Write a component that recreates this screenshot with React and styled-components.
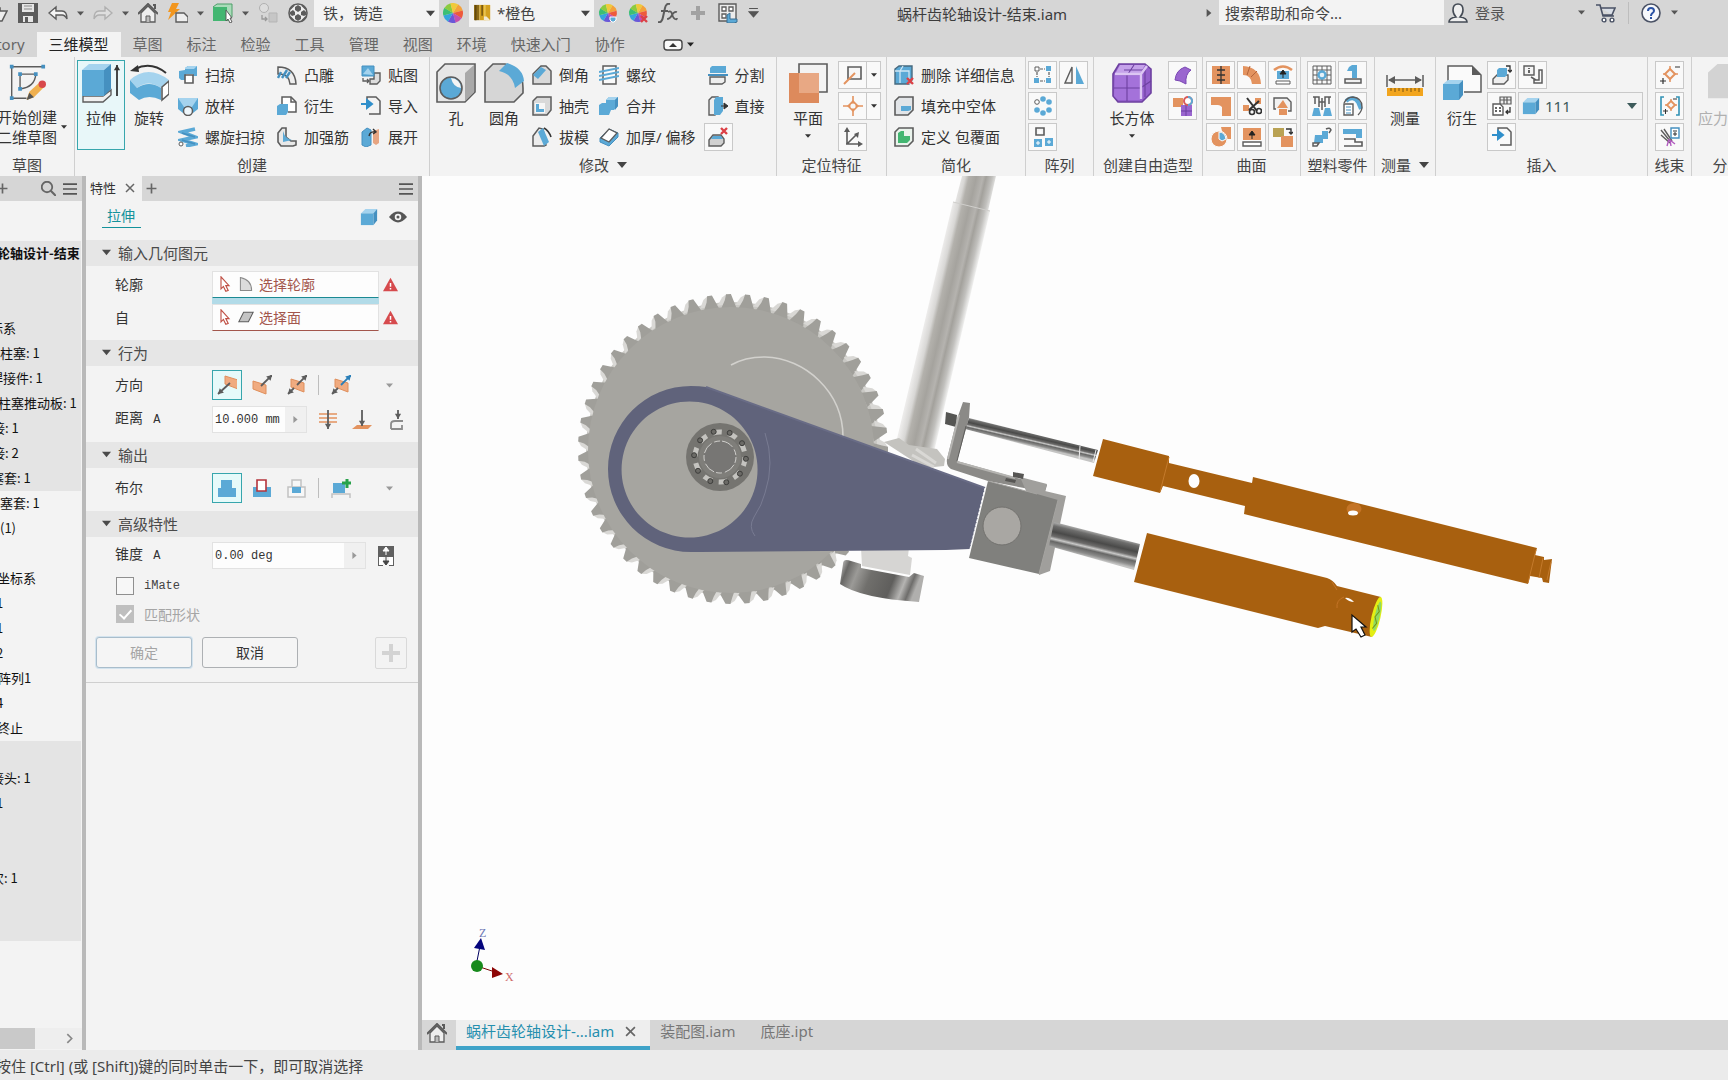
import React from 'react'
import styled, { createGlobalStyle } from 'styled-components'

const GlobalStyle = createGlobalStyle`
  * {
    box-sizing: border-box;
  }
  body {
    margin: 0;
    background: #ebebeb;
    color: #333;
    font-family: 'Noto Sans', 'Noto Sans CJK SC', sans-serif;
    font-size: 15px;
    line-height: 20px;
    overflow-x: hidden;
  }
  button, input, select {
    font: inherit;
    color: inherit;
    margin: 0;
    padding: 0;
    border: 0;
    background: none;
    border-radius: 0;
  }
  h1, h2, ul {
    margin: 0;
    padding: 0;
    font-size: inherit;
    font-weight: normal;
    list-style: none;
  }
  svg {
    display: block;
    flex: none;
  }
`

/* ---------- icons ---------- */

const B = '#5ba9d6'
const L = '#a5d3ee'
const D = '#4590c0'
const G = '#5c5c5c'
const O = '#e3935f'

const Doc = ({ x = 0, y = 0 }) => (
  <path d={`M${x + 3} ${y + 7}V${y + 1}h9l4 4v13H${x + 5}`} fill="none" stroke={G} strokeWidth="1.5" />
)
const RedX = ({ x, y }) => <path d={`M${x} ${y}l6 6m0-6l-6 6`} stroke="#dc4046" strokeWidth="2.4" />
const Wheel = ({ r = 10 }) => {
  const colors = ['#f4a13a', '#ee5a3c', '#c54fae', '#6a58d8', '#35a5dc', '#3cbf74', '#8bcb3f', '#f0c93a']
  return colors.map((c, i) => {
    const a = ((i * 45 - 60) * Math.PI) / 180
    const b = ((i * 45 - 14) * Math.PI) / 180
    return (
      <path key={c} fill={c} d={`M10 10L${10 + r * Math.cos(a)} ${10 + r * Math.sin(a)}A${r} ${r} 0 0 1 ${10 + r * Math.cos(b)} ${10 + r * Math.sin(b)}Z`} />
    )
  })
}
const Cube = () => (
  <>
    <path d="M1 6l5-5h13l-3 5z" fill={L} />
    <path d="M1 6h14v13H1z" fill={B} />
    <path d="M15 6l4-5v13l-4 5z" fill={D} />
  </>
)
const Plane = ({ x = 0, y = 0 }) => <path d={`M${x + 4} ${y + 4}l13 4v9l-13-5z`} fill="#f0ab80" stroke="#e08f5c" />
const Arrow = ({ c = G, from = [14, 7], to = [3, 20] }) => {
  const a = Math.atan2(to[1] - from[1], to[0] - from[0])
  const p = (o, d) => `${to[0] + d * Math.cos(a + o)} ${to[1] + d * Math.sin(a + o)}`
  return (
    <>
      <path d={`M${from[0]} ${from[1]}L${to[0]} ${to[1]}`} stroke={c} strokeWidth="1.8" />
      <path d={`M${to[0]} ${to[1]}L${p(2.6, 6)}L${p(-2.6, 6)}Z`} fill={c} />
    </>
  )
}

const icons = {
  open: <path d="M0 18h14l5-10H5L0 16M12 8V5H0" fill="#eee" stroke={G} strokeWidth="1.6" />,
  save: (
    <>
      <path d="M0 0h20v20H0z" fill={G} />
      <path d="M4 1h12v8H4zM5 13h10v6H5z" fill="#e6e6e6" />
      <path d="M6 3h8M6 6h8" stroke="#888" />
      <path d="M7 14h3v5H7z" fill={G} />
    </>
  ),
  undo: <path d="M1 10l7-6v4h6q5 0 5 8-2-4-5-4H8v4z" fill="#f4f4f4" stroke={G} strokeWidth="1.4" />,
  redo: <path d="M19 10l-7-6v4H6q-5 0-5 8 2-4 5-4h6v4z" fill="#dedede" stroke="#b0b0b0" strokeWidth="1.4" />,
  home: (
    <>
      <path d="M3 10v9h14v-9l-7-7z" fill="#eee" stroke={G} strokeWidth="1.3" />
      <path d="M0 11L10 1l10 10M15 2h2v4" fill="none" stroke={G} strokeWidth="2" />
      <path d="M8 19v-6h4v6" fill="#bbb" stroke={G} />
    </>
  ),
  bolt: (
    <>
      <path d="M4 0h7L8 6h4L0 17l3-8H0z" fill="#f2961e" />
      <path d="M8 10h8l4 4v5H8z" fill="#eee" stroke={G} strokeWidth="1.4" />
    </>
  ),
  select: (
    <>
      <path d="M0 4l4-3h15v13l-4 4z" fill="#a9dcb9" stroke="#4d9e69" />
      <path d="M0 4h14v14H0z" fill="#43b671" />
      <path d="M13 7v11l2-2 2 4 2-1-2-4h2z" fill="#fff" stroke={G} />
    </>
  ),
  link: (
    <>
      <circle cx="6" cy="5" r="4.5" fill="#ddd" stroke="#b0b0b0" />
      <path d="M11 10h8v9h-8z" fill="#c6c6c6" stroke="#b5b5b5" />
      <path d="M4 12v4h5m-2-2l2 2-2 2" fill="none" stroke="#999" strokeWidth="1.3" />
    </>
  ),
  ball: (
    <>
      <circle cx="10" cy="10" r="9" fill="#eee" stroke={G} strokeWidth="1.6" />
      <path d="M7 4l3-2 3 2v3l-3 2-3-2zM7 13l3-2 3 2v3l-3 2-3-2zM2 9l3-2 2 2v3l-3 1-2-2zM13 9l3-2 2 2v3l-2 1-3-1z" fill={G} />
      <path d="M2 6l4-4M14 2l4 4M2 14l4 4M18 14l-4 4" stroke={G} strokeWidth="2" />
    </>
  ),
  wheel: <Wheel />,
  wheelPick: (
    <>
      <Wheel r={9} />
      <path d="M12 14h6v3l-2 2h-2l-2-2z" fill={B} stroke="#fff" />
    </>
  ),
  wheelClear: (
    <>
      <Wheel r={9} />
      <RedX x={13} y={13} />
    </>
  ),
  swatch: (
    <>
      <path d="M0 1h6v17H0z" fill="#8b6a16" />
      <path d="M6 1h12v17H6z" fill="#d3a01f" />
      <path d="M2 1v17M9 1v12" stroke="#5c420c" strokeWidth="1.4" />
      <path d="M12 1v17" stroke="#e9c34f" strokeWidth="2" />
      <path d="M11 14h3l4 4h-7z" fill="#f3ead0" />
    </>
  ),
  fx: (
    <>
      <path d="M0 19q4 1 5-5l2-9q1-5 5-4M3 8h7" fill="none" stroke={G} strokeWidth="2" />
      <path d="M10 9q3-2 4 2t3 5 2-1M19 9q-3-1-5 3t-5 4" fill="none" stroke={G} strokeWidth="1.7" />
    </>
  ),
  plusGrey: <path d="M10 3v14M3 10h14" stroke="#a2a2a2" strokeWidth="4" />,
  parts: (
    <>
      <path d="M1 1h17v17H1z" fill="#ececec" stroke={G} strokeWidth="1.4" />
      <path d="M4 4h4v4H4zM11 4h4v4h-4zM4 11h4v4H4z" fill="#fff" stroke={G} strokeWidth="1.3" />
      <path d="M9 12l3-2v6h7v3l-3 1H9z" fill={B} stroke="#3b6f93" />
    </>
  ),
  user: (
    <path d="M1 19q0-4 7-5-3-3-3-7 0-6 5-6t5 6q0 4-3 7 7 1 7 5z" fill="#efefef" stroke="#444b55" strokeWidth="1.6" />
  ),
  cart: (
    <>
      <path d="M0 2h4l3 11h11M5 5h14l-3 7H7" fill="#d9dee6" stroke="#4a5265" strokeWidth="1.6" />
      <circle cx="8" cy="17" r="1.9" fill="#fff" stroke="#4a5265" strokeWidth="1.4" />
      <circle cx="16" cy="17" r="1.9" fill="#fff" stroke="#4a5265" strokeWidth="1.4" />
    </>
  ),
  help: (
    <>
      <circle cx="10" cy="10" r="9" fill="#f6f8fc" stroke="#4a5265" strokeWidth="1.6" />
      <path d="M7 8q0-3 3-3t3 3q0 1-2 2.500-1 1-1 2.500M10 14v2" fill="none" stroke="#2a52a5" strokeWidth="2" />
    </>
  ),
  collapse: (
    <>
      <rect x="1" y="5" width="18" height="10" rx="3" fill="#fafafa" stroke="#444" strokeWidth="1.4" />
      <path d="M6 12l4-4 4 4z" fill="#333" />
    </>
  ),
  /* large ribbon icons, 40 x 40 */
  sketch: (
    <>
      <path d="M4 4h34M4 4v34M4 38h16" fill="none" stroke={G} strokeWidth="1.5" />
      <path d="M13 12v16q16-2 17-16H13" fill="none" stroke={G} strokeWidth="1.5" />
      <path d="M2 2h4v4H2zM36 2h4v4h-4zM2 36h4v4H2zM11 10h4v4h-4zM28 10h4v4h-4zM11 26h4v4h-4z" fill={D} />
      <path d="M20 40l3-9 11-10 5 5-11 11z" fill="#f0b04f" />
      <path d="M20 40l3-8 5 5z" fill="#555" />
      <circle cx="37" cy="23" r="4" fill="#d8484b" />
    </>
  ),
  extrude: (
    <>
      <path d="M2 33h20l8-6v5l-8 7H2z" fill="#f0f0f0" stroke={G} strokeWidth="1.4" />
      <path d="M1 7l7-6h22l-7 6z" fill={L} />
      <path d="M1 7h22v26H1z" fill={B} />
      <path d="M23 7l7-6v25l-7 7z" fill={D} />
      <Arrow c="#333" from={[36, 33]} to={[36, 2]} />
    </>
  ),
  revolve: (
    <>
      <path d="M1 17q18-16 39 0l-8 8q-13-9-24 0z" fill={L} />
      <path d="M1 17l7 8q12-8 24 0v12q-12-6-22 0L1 30z" fill={B} />
      <path d="M33 24l7-6v13l-7 6z" fill="#fff" stroke={G} strokeWidth="1.6" />
      <path d="M37 10Q22-2 6 6" fill="none" stroke="#333" strokeWidth="2" />
      <path d="M1 8l8-6 1 7z" fill="#333" />
    </>
  ),
  hole: (
    <>
      <path d="M1 9l8-8h30v28l-10 10H1z" fill="#e6e6e6" stroke={G} strokeWidth="1.6" />
      <path d="M29 10l9-8v27l-9 9z" fill="#a9a9a9" />
      <circle cx="15" cy="25" r="11" fill={B} stroke={G} strokeWidth="1.6" />
      <path d="M15 15a10 10 0 0 1 10 10q-8-1-10-10z" fill="#f4f4f4" />
    </>
  ),
  fillet: (
    <>
      <path d="M1 9l8-8h12q18 4 18 24v5l-9 9H1z" fill="#d6d6d6" stroke={G} strokeWidth="1.6" />
      <path d="M23 0q16 5 17 18l-9 7Q29 11 15 8z" fill={B} />
    </>
  ),
  workplane: (
    <>
      <path d="M11 1h28v28H11z" fill="none" stroke={G} strokeWidth="1.6" />
      <path d="M1 10h30v30H1z" fill="#dd8a5c" />
      <path d="M11 10h20v20H11z" fill="#e8a884" />
    </>
  ),
  box: (
    <>
      <path d="M7 1h26l6 5v24l-9 9H6l-5-6V11z" fill="#9460cc" stroke="#6d40a0" strokeWidth="1.6" />
      <path d="M3 13h25v24H6l-4-4z" fill="#a472da" />
      <path d="M8 2h25l-5 9H3z" fill="#c5a2ea" />
      <path d="M15 12v26M2 25h27M33 8v26M12 7h22M22 2l-6 9M30 24l9-6" fill="none" stroke="#6d40a0" strokeWidth="1.1" />
      <path d="M3 11h26l6-8M29 11v25" fill="none" stroke="#dcc6f3" strokeWidth="2.4" />
    </>
  ),
  measure: (
    <>
      <path d="M2 12v12M38 12v12M4 17h32" stroke={G} strokeWidth="1.5" />
      <path d="M3 17l7-4v8zM37 17l-7-4v8z" fill={G} />
      <path d="M2 25h36v8H2z" fill="#f2a51e" />
      <path d="M6 25v3m4-3v4m4-4v3m4-3v4m4-4v3m4-3v4m4-4v3m4-3v4" stroke="#7b5410" />
    </>
  ),
  derive: (
    <>
      <path d="M6 18V3h24l9 9v17H22" fill="#fafafa" stroke={G} strokeWidth="1.5" />
      <path d="M30 3v9h9z" fill={G} />
      <path d="M1 21l5-4h15l-4 4z" fill={L} />
      <path d="M1 21h16v16H1z" fill={B} />
      <path d="M17 21l4-4v15l-4 5z" fill={D} />
    </>
  ),
  stress: <path d="M0 10l10-9h24l6 10v26H0z" fill="#d3d3d3" />,
  /* small ribbon icons */
  sweep: (
    <>
      <path d="M7 5V3l3-2h9v10h-4V9H8v6H3l-2-2V6z" fill={B} />
      <path d="M7 3l3-2h9l-3 3H7z" fill={L} />
      <path d="M7 10h8v8H7z" fill="#fff" stroke={G} strokeWidth="1.6" />
    </>
  ),
  loft: (
    <>
      <path d="M0 2h20v11l-5 4H5l-5-4z" fill={B} />
      <path d="M0 2h20l-6 9H6z" fill={L} />
      <circle cx="10" cy="15" r="4.5" fill="#eef6fb" stroke={G} strokeWidth="1.5" />
    </>
  ),
  coil: (
    <>
      <path d="M17 2L4 5l13 5-13 3 13 4-9 2" fill="none" stroke={B} strokeWidth="3.6" />
      <path d="M17 10L4 6M17 17L4 13" stroke={D} strokeWidth="1.6" />
      <circle cx="3" cy="17" r="2" fill="#fff" stroke={G} />
    </>
  ),
  emboss: (
    <>
      <path d="M1 2q17 0 18 17h-6Q12 8 1 9z" fill="#eee" stroke={G} strokeWidth="1.5" />
      <path d="M1 13l3-6M5 13l5-8M9 13l4-6" stroke={D} strokeWidth="2.4" />
    </>
  ),
  deriveSm: (
    <>
      <path d="M5 8V1h9l5 5v10h-8" fill="#fff" stroke={G} strokeWidth="1.5" />
      <path d="M14 1v5h5" fill="none" stroke={G} strokeWidth="1.5" />
      <path d="M0 10l3-2h8v8l-2 3H0z" fill={B} />
    </>
  ),
  rib: (
    <>
      <path d="M1 6l4-5h4v9l5 4h5v4l-3 1H4l-3-4z" fill="#e8e8e8" stroke={G} strokeWidth="1.6" />
      <path d="M6 4q2 8 9 9l-9 2z" fill={B} />
    </>
  ),
  decal: (
    <>
      <path d="M13 8h6v8l-3 3H9v-5h4z" fill="#ddd" stroke={G} strokeWidth="1.4" />
      <path d="M1 1h12v10H1z" fill={B} stroke={D} />
      <path d="M2 9l5-6 5 7z" fill={L} />
      <path d="M2 13v3h6m-2-2l2 2-2 2" fill="none" stroke={G} strokeWidth="1.3" />
    </>
  ),
  importDoc: (
    <>
      <Doc x={3} />
      <path d="M0 8h9M6 4l5 4-5 4z" stroke="#2f8fcb" strokeWidth="2" fill="#2f8fcb" />
    </>
  ),
  unfold: (
    <>
      <path d="M1 5l5-4 4 2v15l-5 2-4-2z" fill={B} stroke={D} />
      <path d="M12 4l6-2v14l-3 2-3-2z" fill="#e7a582" />
      <path d="M8 9q1-5 6-4m-2-3l3 3-3 2" fill="none" stroke="#333" strokeWidth="1.4" />
    </>
  ),
  chamfer: (
    <>
      <path d="M1 9l8-8h5l5 5v13H1z" fill="#d9d9d9" stroke={G} strokeWidth="1.5" />
      <path d="M1 10l8-8 5 3-8 9z" fill={B} />
    </>
  ),
  shell: (
    <>
      <path d="M1 5l4-4h14v13l-4 5H1z" fill="#d9d9d9" stroke={G} strokeWidth="1.5" />
      <path d="M3 7h10v10H3z" fill="#f6f6f6" />
      <path d="M4 8h3v5h5v3H4z" fill={B} />
    </>
  ),
  draft: (
    <>
      <path d="M1 9l6-8 4 1 3 16-2 1H1z" fill="#ececec" stroke={G} strokeWidth="1.5" />
      <path d="M6 5l5-4 6 14-5 4z" fill={B} />
      <path d="M12 1q5 3 7 9" fill="none" stroke="#333" strokeWidth="1.6" />
    </>
  ),
  thread: (
    <>
      <path d="M4 1h13v18H4z" fill="#fafafa" stroke={G} strokeWidth="1.5" />
      <path d="M0 7l20-4M0 11l20-4M0 15l20-4" stroke={B} strokeWidth="2.2" />
    </>
  ),
  combine: (
    <>
      <path d="M7 4l3-3h9v9l-4 4h-3l-2 5H0V9l3-2h4z" fill={B} />
      <path d="M7 4l3-3h9l-3 3z" fill={L} />
      <path d="M16 4l3-3v9l-3 4z" fill={D} />
    </>
  ),
  thicken: (
    <>
      <path d="M1 11l9-9 9 4v4l-9 9-9-4z" fill={B} stroke={D} />
      <path d="M2 11l8-9 8 4-8 9z" fill="#fff" stroke={G} strokeWidth="1.3" />
    </>
  ),
  split: (
    <>
      <path d="M2 3l2-2h14v7H2z" fill={B} />
      <path d="M0 10h20" stroke={D} strokeWidth="2" />
      <path d="M2 12h15v5l-3 2H2z" fill="#eee" stroke={G} strokeWidth="1.4" />
    </>
  ),
  direct: (
    <>
      <path d="M1 4l3-3h6v15l-3 3H1z" fill="#eee" stroke={G} strokeWidth="1.4" />
      <path d="M6 4l2-3h7v14l-3 4H6z" fill={B} />
      <path d="M13 10h6m-3-3l4 3-4 3z" fill="#333" stroke="#333" />
    </>
  ),
  removeFace: (
    <>
      <path d="M1 13l4-5h8l3 4v4l-3 3H1z" fill="#d0d0d0" stroke={G} strokeWidth="1.4" />
      <path d="M5 9h8l2 3H3z" fill={B} />
      <RedX x={13} y={1} />
    </>
  ),
  axis: (
    <>
      <path d="M5 2h13v12H5z" fill="#f6f6f6" stroke={G} strokeWidth="1.6" />
      <path d="M1 19L12 8" stroke={O} strokeWidth="2" />
    </>
  ),
  point: (
    <>
      <path d="M10 0v20M0 10h20" stroke={O} strokeWidth="1.6" />
      <path d="M10 4l6 6-6 6-6-6z" fill={O} />
      <circle cx="10" cy="10" r="2.600" fill="#f8f8f8" />
    </>
  ),
  ucs: (
    <>
      <path d="M4 17V2M3 17h15M4 17L14 7" stroke={G} strokeWidth="1.6" />
      <path d="M4 0L1 5h6zM20 17l-5-3v6zM16 5l-1 6-4-4z" fill={G} />
    </>
  ),
  removeDetail: (
    <>
      <path d="M1 4l4-3h13v14l-3 4H1z" fill={B} stroke="#46697f" strokeWidth="1.4" />
      <path d="M1 6h14v13M6 6v12M9 1L6 6" fill="none" stroke="#cfe6f4" strokeWidth="1.3" />
      <RedX x={13} y={13} />
    </>
  ),
  fillVoid: (
    <>
      <path d="M1 5l4-4h14v13l-5 5H1z" fill="#e2e5e8" stroke={G} strokeWidth="1.6" />
      <path d="M7 10h10v4l-3 1H7z" fill={B} />
    </>
  ),
  envelope: (
    <>
      <path d="M1 5l4-4h14v13l-5 5H1z" fill="#eaf3ec" stroke={G} strokeWidth="1.6" />
      <path d="M4 6l3-2h3v5h6v4l-3 3H4z" fill="#43b671" />
    </>
  ),
  rect: (
    <>
      <path d="M7 4h5M4 7v5M16 7v5M7 16h5" stroke={G} strokeDasharray="3 1" strokeWidth="1.2" />
      <path d="M2 2h4v4H2z" fill="#fff" stroke={G} />
      <path d="M13 1h5v5h-5zM1 13h5v5H1zM13 13h5v5h-5z" fill={B} />
    </>
  ),
  mirror: (
    <>
      <path d="M8 2v16H1z" fill="#f4f4f4" stroke={G} strokeWidth="1.4" />
      <path d="M12 1v18h8z" fill={B} />
    </>
  ),
  circular: (
    <>
      {[[10, 3], [16, 6], [16, 14], [10, 17], [4, 14]].map(([x, y]) => (
        <circle key={`${x}-${y}`} cx={x} cy={y} r="2.800" fill={B} />
      ))}
      <circle cx="4" cy="6" r="2.300" fill="#fff" stroke={G} />
    </>
  ),
  sketchDriven: (
    <>
      <path d="M3 1h8v7H3z" fill="#f4f4f4" stroke={G} strokeWidth="1.6" />
      <path d="M1 12h8v8H1zM12 11h8v8h-8z" fill={B} />
      <path d="M7 3v4M5 5h4M5 14v4M3 16h4M16 13v4M14 15h4" stroke="#fff" />
    </>
  ),
  face: <path d="M2 15Q3 5 12 2l6 3q-6 4-5 14l-6-3z" fill="#9a66cf" stroke="#7a48b3" />,
  convert: (
    <>
      <path d="M0 2h10v9H0z" fill={O} />
      <path d="M8 9h11v11H8z" fill="#9a66cf" />
      <path d="M13 9v11M8 15h11" stroke="#6d40a0" />
      <circle cx="15" cy="5" r="4" fill="#fff" stroke="#d85a5a" strokeWidth="2" />
      <path d="M15 1a4 4 0 0 1 0 8" stroke={B} strokeWidth="2" fill="none" />
    </>
  ),
  stitch: (
    <>
      <path d="M1 1h18v18H1z" fill={O} />
      <path d="M10 1v18M6 5h8M6 10h8M6 15h8" stroke="#333" strokeWidth="1.3" />
    </>
  ),
  patch: (
    <>
      <path d="M1 1q17 1 18 18h-9Q9 10 1 10z" fill={O} />
      <path d="M8 1l-3 9M15 6l-6 6" stroke="#b5653a" />
    </>
  ),
  ruled: (
    <>
      <path d="M1 5q9-7 18 0" fill="none" stroke={O} strokeWidth="2.600" />
      <path d="M4 6h12v8H4z" fill={B} />
      <path d="M10 13V6M7 9l3-4 3 4z" fill="#222" stroke="#222" />
      <path d="M3 16h14v3H3z" fill="#fff" stroke={G} />
    </>
  ),
  trimFace: <path d="M0 1h20v19h-9v-9q-2-2-4-2H0z" fill={O} />,
  cut: (
    <>
      <path d="M13 2h6v6h-6zM1 9h6v6H1z" fill={O} />
      <path d="M5 2l10 13M17 5L7 14" stroke="#333" strokeWidth="2" />
      <circle cx="10" cy="16" r="2.500" fill="none" stroke="#333" strokeWidth="1.600" />
      <circle cx="17" cy="15" r="2.500" fill="none" stroke="#333" strokeWidth="1.600" />
    </>
  ),
  sculpt: (
    <>
      <path d="M3 13H1V2h13l4 4v9h-3" fill="#f2f2f2" stroke={G} strokeWidth="1.4" />
      <path d="M4 12l6-8 5 8zM6 13h8v6H6z" fill={O} />
    </>
  ),
  extend: (
    <>
      <path d="M10 0h10v12h-7z" fill={O} />
      <circle cx="8" cy="12" r="8" fill={O} stroke="#f9f9f9" />
      <path d="M8 5q6 0 7 7l-4 2-3-2z" fill={B} stroke="#fff" />
    </>
  ),
  replace: (
    <>
      <path d="M1 1h18v12H1z" fill={O} />
      <path d="M10 12V5M7 8l3-4 3 4z" fill="#222" stroke="#222" />
      <path d="M1 15h18v4H1z" fill="#fff" stroke={G} strokeWidth="1.4" />
    </>
  ),
  copy: (
    <>
      <path d="M0 1h11v9H0z" fill="#b9a253" />
      <path d="M8 9h12v11H8z" fill={O} />
      <path d="M13 2h5v4m-2-1l2 2 2-2" fill="none" stroke="#333" strokeWidth="1.4" />
    </>
  ),
  grill: (
    <>
      <path d="M1 1h18v18H1zM1 5h18M1 10h18M1 15h18M5 1v18M10 1v18M15 1v18" fill="none" stroke={G} />
      <circle cx="10" cy="10" r="3.500" fill="#e6f2f9" stroke={B} strokeWidth="2.400" />
    </>
  ),
  boss: (
    <>
      <path d="M6 2l3-2h5v13H9V6H4z" fill={B} />
      <path d="M2 14h16v4H2z" fill="#f0f0f0" stroke={G} strokeWidth="1.500" />
    </>
  ),
  snap: (
    <>
      <path d="M2 12h5l2 8H0zM13 12h5l2 8h-9z" fill={B} />
      <path d="M1 1h6v10M19 1h-6v10M3 1v7M17 1v7M10 2v12M7 6h6" fill="none" stroke={G} strokeWidth="1.500" />
    </>
  ),
  rest: (
    <>
      <path d="M3 5q7-6 12 1l3 7" fill="none" stroke={B} strokeWidth="4" />
      <path d="M1 7q3-6 9-6 9 1 9 10 0 4-4 8" fill="none" stroke={G} strokeWidth="1.300" />
      <path d="M1 8h9v11H1z" fill="#fff" stroke={G} strokeWidth="1.400" />
      <path d="M3 11h5M3 14h5M3 17h5" stroke={D} />
    </>
  ),
  ruleFillet: (
    <>
      <path d="M3 8h7V4h6v8h-5v4H2z" fill={B} />
      <path d="M1 19v-3h6l-2 3zM14 2q4-2 5 1l-2 3" fill="none" stroke={G} strokeWidth="1.500" />
    </>
  ),
  lip: (
    <>
      <path d="M0 2h19v9h-6V7H0z" fill={B} />
      <path d="M1 12h11v3h7v4H1" fill="none" stroke={G} strokeWidth="1.600" />
    </>
  ),
  place: (
    <>
      <path d="M1 14l4-4h11v5l-4 4H1z" fill="#eee" stroke={G} strokeWidth="1.400" />
      <path d="M5 5l2-2h8v7l-2 2H5z" fill={B} />
      <path d="M14 1h4v6m-2-2l2 2 2-2" fill="none" stroke="#333" strokeWidth="1.300" />
    </>
  ),
  insertInfo: (
    <>
      <path d="M1 1h10v9H1z" fill="#f4f4f4" stroke={G} strokeWidth="1.400" />
      <path d="M6 3v1M6 5v3" stroke="#333" strokeWidth="1.500" />
      <path d="M8 12l5 3m6-10v13h-8v-3h5V5z" fill="none" stroke={G} strokeWidth="1.500" />
    </>
  ),
  table: (
    <>
      <path d="M8 1h11v7H8zM8 4h11M12 1v7M15 1v7" fill="#eee" stroke={G} strokeWidth="1.200" />
      <path d="M1 8h7l3 3v8H1z" fill="#fff" stroke={G} strokeWidth="1.400" />
      <path d="M3 12h2M7 12h2M3 15h2M7 15h2M18 11v5h-4m2-2l-2 2 2 2" fill="none" stroke="#333" strokeWidth="1.300" />
    </>
  ),
  pinAdd: (
    <>
      <path d="M10 1v16M3 9h15" stroke={O} strokeWidth="1.500" />
      <path d="M10 4l5 5-5 5-5-5z" fill="#f6f6f6" stroke={O} strokeWidth="2" />
      <path d="M0 16h6M3 13v6M15 2h5" stroke="#333" strokeWidth="1.200" />
    </>
  ),
  pinGroup: (
    <>
      <path d="M4 1H1v18h3M16 1h3v18h-3" fill="none" stroke="#3292b5" strokeWidth="1.600" />
      <path d="M11 3v12M5 9h12" stroke={O} strokeWidth="1.400" />
      <path d="M11 5l4 4-4 4-4-4z" fill="#f6f6f6" stroke={O} strokeWidth="1.800" />
      <path d="M3 15h5M5.500 13v5M13 3h4" stroke="#333" />
    </>
  ),
  harness: (
    <>
      <path d="M1 3l9 11M1 8l9 8M4 2l8 12" stroke={G} strokeWidth="1.400" />
      <path d="M9 12l-2 7M10 13l5 4M10 13l1 6" stroke="#b25ac0" strokeWidth="1.400" />
      <path d="M11 1h8v10h-8z" fill="#fff" stroke={D} strokeWidth="1.400" />
      <path d="M13 4h4M13 7h4M15 5v4" stroke="#333" />
    </>
  ),
  cube: <Cube />,
  /* property panel icons */
  eye: (
    <>
      <path d="M0 10q10-12 20 0-10 12-20 0z" fill="#555" />
      <circle cx="10" cy="10" r="3.600" fill="#f3f3f3" />
      <circle cx="10" cy="10" r="1.700" fill="#555" />
    </>
  ),
  pick: <path d="M5 1v15l3-3 3 6 3-1-3-6h4z" fill="#fff" stroke="#c05045" strokeWidth="1.400" />,
  profile: <path d="M3 2q14 3 14 16H3z" fill="#dcdcdc" stroke="#8a8a8a" strokeWidth="1.300" />,
  facePick: <path d="M7 4h12l-6 12H1z" fill="#c4c4c4" stroke="#5c5c5c" strokeWidth="1.300" />,
  warn: (
    <>
      <path d="M10 1l10 18H0z" fill="#d64a4d" />
      <path d="M10 8v5M10 14.500v2" stroke="#fff" strokeWidth="2" />
    </>
  ),
  dir1: (
    <>
      <Plane x={4} y={-3} />
      <Arrow from={[13, 8]} to={[1, 19]} />
    </>
  ),
  dir2: (
    <>
      <Plane x={-3} y={2} />
      <Arrow from={[9, 11]} to={[20, 0]} />
    </>
  ),
  dir3: (
    <>
      <Plane />
      <Arrow from={[10, 10]} to={[20, 0]} />
      <Arrow from={[7, 13]} to={[1, 19]} />
    </>
  ),
  dir4: (
    <>
      <Plane />
      <Arrow c="#2a7fb8" from={[10, 10]} to={[20, 0]} />
      <Arrow from={[7, 13]} to={[1, 19]} />
    </>
  ),
  through: (
    <>
      <path d="M1 4h18M1 8h18M1 12h18" stroke={O} strokeWidth="1.500" />
      <Arrow from={[10, 0]} to={[10, 19]} />
    </>
  ),
  toFace: (
    <>
      <path d="M5 15h15l-4 4H0z" fill={O} />
      <Arrow from={[10, 0]} to={[10, 16]} />
    </>
  ),
  toNext: (
    <>
      <path d="M5 19v-5q0-3 4-3h8M5 19h11v-4" fill="none" stroke="#8c8c8c" strokeWidth="1.800" />
      <Arrow from={[12, 0]} to={[12, 9]} />
    </>
  ),
  join: <path d="M4 2h11v8h4v9H1v-9h3z" fill={B} />,
  subtract: (
    <>
      <path d="M1 9h18v10H1z" fill={B} />
      <path d="M5 2h9v11H5z" fill="#fff" stroke="#b5343c" strokeWidth="1.600" />
    </>
  ),
  intersect: (
    <>
      <path d="M1 9h17v10H1zM5 2h9v7H5z" fill="#f7f7f7" stroke="#c2c2c2" strokeWidth="1.500" />
      <path d="M5 9h9v6H5z" fill={B} />
    </>
  ),
  newSolid: (
    <>
      <path d="M2 5h12v10H2z" fill={B} />
      <path d="M16 1v9M11 5h9" stroke="#28a24b" strokeWidth="3" />
      <path d="M1 20v-4h18v4" fill="none" stroke="#c2c2c2" strokeWidth="1.500" />
    </>
  ),
  flip: (
    <>
      <path d="M2 0h16v20H2z" fill="#606060" />
      <path d="M3 11h4v8H3zM13 11h4v8h-4z" fill="#fff" />
      <path d="M10 9V1M7 5l3-4 3 4z" stroke="#fff" fill="#fff" />
      <path d="M7 11h6v9H7z" fill="#f3f3f3" />
      <path d="M10 11v8M7 15l3 4 3-4z" stroke="#444" fill="#444" />
    </>
  ),
  search: (
    <>
      <circle cx="8" cy="8" r="7" fill="none" stroke="#666" strokeWidth="2.400" />
      <path d="M13 13l7 7" stroke="#666" strokeWidth="2.800" />
    </>
  ),
  menu: <path d="M0 3h20M0 10h20M0 17h20" stroke="#555" strokeWidth="2.400" />,
  plus: <path d="M10 1v18M1 10h18" stroke="#666" strokeWidth="3" />,
  close: <path d="M2 2l16 16M18 2L2 18" stroke="#666" strokeWidth="3" />,
  down: <path d="M0 4h20L10 16z" fill="currentColor" />,
  right: <path d="M4 0v20l12-10z" fill="currentColor" />,
  chevron: <path d="M6 2l8 8-8 8" fill="none" stroke="#888" strokeWidth="3" />,
  customize: <path d="M2 1h16M2 7h16l-8 9z" fill="#555" stroke="#555" strokeWidth="2" />,
}

const Icon = ({ name, size = 20, box = 20 }) => (
  <svg width={size} height={size} viewBox={`0 0 ${box} ${box}`} aria-hidden="true">
    {icons[name]}
  </svg>
)

/* ---------- title bar ---------- */

const Page = styled.div`
  display: flex;
  flex-direction: column;
  min-height: 100vh;
`
const TitleBar = styled.header`
  display: flex;
  align-items: flex-start;
  justify-content: space-between;
  height: 32px;
  background: #d6d6d6;
`
const QuickTools = styled.div`
  display: flex;
  align-items: center;
  height: 26px;
  gap: 10px;
  margin-left: -12px;
`
const ToolButton = styled.button`
  display: flex;
  color: #555;
  justify-content: center;
`
const CaretButton = styled(ToolButton)`
  width: 15px;
  margin: 0 -5px;
`
const Combo = styled.label`
  display: flex;
  align-items: center;
  width: 125px;
  height: 27px;
  padding: 0 4px 0 ${p => (p.$swatch ? '5px' : '9px')};
  margin: 0 -6px 0 -4px;
  gap: 5px;
  background: #f3f3f3;
  color: #444;
`
const ComboSelect = styled.select`
  appearance: none;
  flex: 1;
  min-width: 0;
  outline: none;
`
const Title = styled.h1`
  padding-top: 4px;
  color: #3c3c3c;
  white-space: nowrap;
`
const AccountTools = styled.div`
  display: flex;
  align-items: center;
  height: 25px;
  color: #555;
`
const SearchBox = styled.input`
  width: 225px;
  height: 25px;
  margin: 0 4px 0 6px;
  padding: 0 6px;
  background: #f3f3f3;
  outline: none;
  &::placeholder {
    color: #444;
    opacity: 1;
  }
`
const Login = styled.button`
  display: flex;
  align-items: center;
  gap: 7px;
  width: 130px;
`
const CartBox = styled.div`
  display: flex;
  align-items: center;
  padding: 0 50px 0 11px;
`
const HelpButton = styled(ToolButton)`
  align-items: center;
  gap: 10px;
`
const Rule = styled.span`
  width: 1px;
  height: 22px;
  margin: 0 12px;
  background: #bdbdbd;
`

const TabBar = styled.nav`
  display: flex;
  align-items: center;
  height: 25px;
  padding-left: 39px;
  background: #d6d6d6;
`
const Tab = styled.button`
  height: 25px;
  padding: 0 12px 2px;
  color: ${p => (p.$active ? '#222' : '#666')};
  background: ${p => (p.$active ? '#f3f3f3' : 'transparent')};
  white-space: nowrap;
`
const FirstTab = styled(Tab)`
  margin-left: -62px;
`
const CollapseButton = styled(ToolButton)`
  align-items: center;
  gap: 4px;
  margin-left: 26px;
  color: #222;
`

/* ---------- ribbon ---------- */

const Ribbon = styled.div`
  display: flex;
  height: 119px;
  background: #f3f3f3;
  overflow: hidden;
`
const Group = styled.section`
  display: flex;
  flex-direction: column;
  flex: none;
  width: ${p => p.$width}px;
  border-right: 1px solid #cfcfcf;
`
const GroupBody = styled.div`
  display: flex;
  flex: 1;
  padding: 3px 0 0 ${p => p.$pad || 2}px;
`
const GroupLabel = styled.h2`
  display: flex;
  align-items: center;
  justify-content: center;
  gap: 8px;
  height: 22px;
  padding: 0 ${p => p.$after || 0}px 1px 0;
  white-space: nowrap;
  color: #444;
`
const BigButton = styled.button`
  display: flex;
  flex-direction: column;
  align-items: center;
  width: 48px;
  height: 90px;
  padding-top: 2px;
  gap: 5px;
  white-space: nowrap;
  color: ${p => (p.$muted ? '#b0b0b0' : '#333')};
  background: ${p => (p.$active ? '#e8f7f9' : 'transparent')};
  border: 1px solid ${p => (p.$active ? '#37a6ad' : 'transparent')};
`
const SketchButton = styled(BigButton)`
  width: 78px;
  align-items: flex-start;
  text-align: left;
  margin-left: -9px;
  gap: 6px;
  padding-left: 3px;
  > svg {
    margin-left: 11px;
  }
`
const SketchText = styled.span`
  display: flex;
  align-items: center;
  gap: 4px;
`
const Column = styled.div`
  display: flex;
  flex-direction: column;
  margin: -1px 0 0 ${p => p.$left || 0}px;
`
const SmallButton = styled.button`
  display: flex;
  align-items: center;
  height: 31px;
  gap: 7px;
  white-space: nowrap;
`
const Tiles = styled.div`
  display: grid;
  grid-template-columns: repeat(${p => p.$cols}, 29px);
  grid-auto-rows: 29px;
  gap: 2px;
  margin: 1px 0 0 ${p => p.$left || 0}px;
`
const Tile = styled.button`
  display: flex;
  flex: none;
  align-items: center;
  justify-content: center;
  width: 29px;
  height: 28px;
  background: #f9f9f9;
  border: 1px solid #c9c9c9;
`
const SplitTile = styled.div`
  display: flex;
`
const CaretTile = styled(Tile)`
  width: 15px;
  margin-left: -1px;
`
const LastTile = styled.div`
  margin: 2px 0 0 -4px;
`
const PartCombo = styled(Combo)`
  height: 28px;
  margin: 0;
  padding: 0 5px 0 3px;
  color: #3c5a5a;
  border: 1px solid #c9c9c9;
`

const Small = ({ icon, children }) => (
  <SmallButton>
    <Icon name={icon} />
    {children}
  </SmallButton>
)
const TileIcon = ({ icon }) => (
  <Tile aria-label={icon}>
    <Icon name={icon} />
  </Tile>
)

/* ---------- work area ---------- */

const Work = styled.main`
  display: flex;
  flex: 1;
`
const Browser = styled.aside`
  display: flex;
  flex-direction: column;
  width: 82px;
  overflow: hidden;
  background: #f3f3f3;
`
const PanelBar = styled.div`
  display: flex;
  align-items: center;
  height: 25px;
  padding-right: ${p => p.$end}px;
  background: #d6d6d6;
`
const BrowserBar = styled(PanelBar)`
  gap: 7px;
  margin-left: -3px;
`
const Tree = styled.ul`
  flex: 1;
  padding-top: 40px;
  margin-right: 1px;
  font-family: 'Noto Sans CJK SC', sans-serif;
  font-size: 13px;
  color: #111;
`
const TreeRow = styled.li`
  display: flex;
  align-items: center;
  height: 25px;
  padding-bottom: 2px;
  overflow: hidden;
  white-space: pre;
  background: ${p => (p.$shade ? '#e4e4e4' : '#f3f3f3')};
  font-weight: ${p => (p.$bold ? 700 : 400)};
  span {
    margin-left: -${p => p.$clip || 0}px;
  }
`
const HScroll = styled.div`
  display: flex;
  align-items: center;
  justify-content: space-between;
  height: 21px;
  margin-bottom: 1px;
  padding-right: 7px;
  background: #eee;
`
const Thumb = styled.span`
  width: 35px;
  height: 21px;
  background: #c9c9c9;
`
const Divider = styled.div`
  width: 4px;
  background: #b9b9b9;
`
const Properties = styled.aside`
  width: 332px;
  background: #f3f3f3;
  font-family: 'Noto Sans CJK SC', sans-serif;
  font-size: 14px;
`
const PropTab = styled.button`
  display: flex;
  align-items: center;
  gap: 9px;
  height: 25px;
  width: 56px;
  padding: 0 0 2px 4px;
  margin-right: 4px;
  background: #f3f3f3;
  font-size: 13px;
`
const Spacer = styled.span`
  flex: 1;
`
const FeatureRow = styled.div`
  display: flex;
  align-items: center;
  height: 39px;
  padding: 0 11px 8px 16px;
  gap: 11px;
`
const FeatureLink = styled.a`
  padding: 0 6px 2px 5px;
  color: #14929b;
  border-bottom: 1px solid #14929b;
  text-decoration: none;
`
const SectionHead = styled.button`
  display: flex;
  align-items: center;
  gap: 7px;
  width: 100%;
  height: 26px;
  padding: 0 0 1px 16px;
  background: #e6e6e6;
  font-size: 15px;
  color: #4a4a4a;
`
const Fields = styled.div`
  display: flex;
  flex-direction: column;
  gap: 6px;
  padding: ${p => p.$pad};
`
const Field = styled.div`
  display: flex;
  align-items: center;
  height: ${p => p.$height || 27}px;
  padding-left: 29px;
`
const Label = styled.label`
  width: 97px;
  padding-bottom: 2px;
  white-space: pre;
`
const Mono = styled.span`
  font-family: 'Liberation Mono', monospace;
  font-size: 12px;
`
const Picker = styled.button`
  display: flex;
  align-items: center;
  gap: 5px;
  width: 167px;
  height: 27px;
  padding: 0 5px 2px 4px;
  margin-right: 4px;
  color: #a3564c;
  background: #fdfdfd;
  border: 1px solid #e2e2e2;
  border-bottom: 1px solid ${p => (p.$active ? '#1b8a93' : '#a3564c')};
  box-shadow: ${p => (p.$active ? '0 6px 0 #b2dbe8' : 'none')};
`
const ModeButton = styled.button`
  display: flex;
  align-items: center;
  justify-content: center;
  width: 30px;
  height: 30px;
  margin-right: 5px;
  border: 1px solid ${p => (p.$active ? '#37a6ad' : 'transparent')};
  background: ${p => (p.$active ? '#e6fafa' : 'transparent')};
`
const ModeRule = styled.span`
  width: 1px;
  height: 20px;
  margin: 0 7px 0 1px;
  background: #bdbdbd;
`
const MoreButton = styled.button`
  margin-left: 25px;
  color: #999;
`
const ValueBox = styled.div`
  display: flex;
  width: ${p => p.$width}px;
  height: 27px;
  margin-right: ${p => p.$after}px;
  border: 1px solid #e2e2e2;
`
const ValueInput = styled.input`
  flex: 1;
  min-width: 0;
  padding: 0 2px;
  background: #fdfdfd;
  font-family: 'Liberation Mono', monospace;
  font-size: 12px;
  outline: none;
`
const ValueMore = styled.button`
  display: flex;
  align-items: center;
  justify-content: center;
  width: 21px;
  color: #999;
  background: #f0f0f0;
`
const Extents = styled.div`
  display: flex;
  gap: 14px;
`
const CheckRow = styled.label`
  display: flex;
  align-items: center;
  gap: 10px;
  height: 22px;
  padding-left: 30px;
  color: ${p => (p.$muted ? '#a5a5a5' : '#444')};
`
const Check = styled.input`
  appearance: none;
  width: 18px;
  height: 18px;
  border: 1px solid #8f8f8f;
  background: #f7f7f7;
  &:checked {
    border-color: #bfbfbf;
    background: #bfbfbf;
  }
  &:checked::after {
    content: '';
    display: block;
    width: 5px;
    height: 10px;
    margin: 1px 5px;
    border: solid #fff;
    border-width: 0 2px 2px 0;
    transform: rotate(42deg);
  }
`
const Actions = styled.div`
  display: flex;
  gap: 10px;
  padding: 7px 11px 13px 10px;
  border-bottom: 1px solid #cfcfcf;
`
const ActionButton = styled.button`
  width: 96px;
  height: 31px;
  padding-bottom: 2px;
  border: 1px solid #adb0b3;
  border-radius: 3px;
  background: #f5f5f5;
  color: #333;
  &:disabled {
    color: #a5a5a5;
    border-color: #a9bdcb;
    box-shadow: 0 0 0 1px #d3e3ee;
  }
`
const AddButton = styled.button`
  display: flex;
  align-items: center;
  justify-content: center;
  width: 32px;
  height: 32px;
  margin-left: auto;
  border: 1px solid #d9d9d9;
  border-radius: 2px;
`

const Viewport = styled.section`
  display: flex;
  flex-direction: column;
  flex: 1;
  min-width: 0;
  background: #fdfdfd;
`
const Scene = styled.svg`
  flex: 1 1 0;
  width: 100%;
  min-height: 0;
`
const AxisText = styled.text`
  font-family: 'Liberation Serif', serif;
  font-size: 12px;
`
const DocTabs = styled.nav`
  display: flex;
  height: 30px;
  background: #d6d6d6;
`
const HomeButton = styled.button`
  width: 34px;
  padding: 0 0 5px 5px;
`
const DocTab = styled.button`
  display: flex;
  align-items: center;
  gap: 11px;
  padding: 0 ${p => (p.$active ? 14 : 12)}px ${p => (p.$active ? 4 : 8)}px 10px;
  margin-right: ${p => (p.$active ? 0 : 3)}px;
  color: ${p => (p.$active ? '#258fae' : '#777')};
  background: ${p => (p.$active ? '#eee' : 'transparent')};
  border-bottom: ${p => (p.$active ? '4px solid #3fa3c8' : 'none')};
  white-space: nowrap;
`
const StatusBar = styled.footer`
  height: 30px;
  padding: 6px 0;
  background: #ebebeb;
  color: #444;
  overflow: hidden;
  white-space: nowrap;
  span {
    margin-left: -4px;
  }
`

/* ---------- model ---------- */

const TEETH = 51
const polar = (cx, cy, r, deg) => {
  const a = (deg * Math.PI) / 180
  return `${(cx + r * Math.cos(a)).toFixed(1)},${(cy + r * Math.sin(a)).toFixed(1)}`
}
const Gear = () => {
  const step = 360 / TEETH
  const teeth = Array.from({ length: TEETH }, (_, i) => i * step)
  return (
    <>
      <circle cx="733" cy="449" r="147" fill="#c9c8c4" />
      {teeth.map(a => (
        <g key={a}>
          <polygon
            fill="#d9d8d5"
            points={[polar(733, 449, 144, a - 4.4), polar(733, 449, 152, a - 2.4), polar(733, 449, 155, a - 0.6), polar(733, 449, 145, a + 2)].join(' ')}
          />
          <polygon
            fill="#a09f9a"
            points={[polar(732, 450, 141, a - 2.8), polar(733, 449, 149, a - 1.4), polar(733, 449, 155, a - 0.8), polar(733, 449, 155, a + 1), polar(732, 450, 142, a + 3.6)].join(' ')}
          />
        </g>
      ))}
      <circle cx="731" cy="450" r="143" fill="#a6a5a0" />
    </>
  )
}
const Bearing = () => (
  <>
    <circle cx="720" cy="457" r="34" fill="#757470" />
    <circle cx="720" cy="457" r="25" fill="none" stroke="#c4c3bf" strokeWidth="5" strokeDasharray="9 6.700" />
    {Array.from({ length: 10 }, (_, i) => {
      const [x, y] = polar(720, 457, 26, i * 36 + 4).split(',')
      return <circle key={i} cx={x} cy={y} r="2.500" fill="#6b6a66" stroke="#3d3d3b" />
    })}
    <circle cx="720" cy="457" r="21" fill="#7f7e7a" />
    <circle cx="720" cy="457" r="16" fill="#777674" stroke="#cfcecb" strokeDasharray="6 2 12 3" />
  </>
)

const SteelStops = () => (
  <>
    <stop offset="0" stopColor="#a4a4a3" />
    <stop offset="0.120" stopColor="#6d6d6c" />
    <stop offset="0.350" stopColor="#4a4a49" />
    <stop offset="0.520" stopColor="#6e6d6c" />
    <stop offset="0.620" stopColor="#c9c9c8" />
    <stop offset="0.720" stopColor="#676766" />
    <stop offset="0.880" stopColor="#8c8c8b" />
    <stop offset="1" stopColor="#c4c4c3" />
  </>
)

const Model = () => (
  <Scene viewBox="422 176 1306 844" preserveAspectRatio="xMinYMin meet" role="img" aria-label="model">
    <defs>
      <linearGradient id="column" gradientUnits="userSpaceOnUse" x1="953" y1="202" x2="990" y2="210.600">
        <stop offset="0" stopColor="#ecebea" />
        <stop offset="0.160" stopColor="#d8d7d5" />
        <stop offset="0.260" stopColor="#b3b1ac" />
        <stop offset="0.450" stopColor="#a5a39e" />
        <stop offset="0.620" stopColor="#b5b3af" />
        <stop offset="0.700" stopColor="#a3a19c" />
        <stop offset="0.860" stopColor="#c1c0bd" />
        <stop offset="1" stopColor="#efefee" />
      </linearGradient>
      <linearGradient id="thinRod" gradientUnits="userSpaceOnUse" x1="1031" y1="432" x2="1028" y2="445">
        <SteelStops />
      </linearGradient>
      <linearGradient id="thickRod" gradientUnits="userSpaceOnUse" x1="1097" y1="533" x2="1091" y2="558">
        <SteelStops />
      </linearGradient>
      <linearGradient id="foot" x1="0" x2="1" y1="0" y2="0.200">
        <stop offset="0" stopColor="#d5d4d2" />
        <stop offset="0.120" stopColor="#686765" />
        <stop offset="0.250" stopColor="#9b9a97" />
        <stop offset="0.420" stopColor="#706f6c" />
        <stop offset="0.700" stopColor="#5f5e5c" />
        <stop offset="0.840" stopColor="#b5b4b2" />
        <stop offset="0.930" stopColor="#6e6d6b" />
        <stop offset="1" stopColor="#b0afad" />
      </linearGradient>
    </defs>

    <Gear />
    <path d="M731 365Q745 357 765 357C805 358 843 392 843 437" fill="none" stroke="#d2d1cd" strokeWidth="1.600" />

    <polygon points="962,176 996,176 988,211 955,203" fill="url(#column)" />
    <polygon points="953,202 990,211 934,452 896,443" fill="url(#column)" />
    <path d="M953 202l37 9" stroke="#cfcecb" />
    <path d="M884 442l15-4 10 7 28 4 8 10-1 7-20 2z" fill="#c4c3bf" />
    <path d="M916 449l20 14M912 455l22 12" stroke="#d9d8d5" strokeWidth="3" />

    <path d="M861 548h48l-1 8 4 2-2 17-48-9z" fill="#d6d5d3" />
    <path d="M861 564l-10-3q-8-3-8 3l-3 20q20 14 79 18l5-26-10-3-5 4-48-9z" fill="url(#foot)" />

    <path
      d="M706 387L985 488 970 549 946 550 700 552H691A83 83 0 0 1 691 386Q700 386 706 387ZM689.500 401.500a68 68 0 1 0 .1 0Z"
      fill="#60637b"
      fillRule="evenodd"
    />
    <path d="M706 387L985 488" stroke="#696c86" strokeWidth="2" />
    <Bearing />
    <path d="M765 433q10 30 0 60-3 12-11 24-6 10 1 19" fill="none" stroke="#787b92" />
    <path d="M985 488l-15 61" stroke="#fff" strokeDasharray="3 1" />

    <polygon points="946,412 957,415 956,427 945,424" fill="#555553" />
    <polygon points="969,418 1098,450 1094,463 965,429" fill="url(#thinRod)" />
    <path d="M1080 446l-1 14M1096 450l-3 12" stroke="#eee" />
    <path d="M963 402l7 1-1 15-12 43 60 17 30 7-2 7-57-11-37-12q-5-3-4-10l10-40z" fill="#8b8a87" />
    <path d="M948 459l11-44M957 462l58 16" stroke="#b5b4b1" strokeWidth="2" />
    <path d="M957 461l9-35" stroke="#5e5d5b" />

    <polygon points="1020,477 1047,484 1045,491 1066,496 1050,571 1039,575 1030,500" fill="#a09f9c" />
    <polygon points="988,481 1037,494 1058,500 1039,574 969,558" fill="#80807d" />
    <path d="M1058 500l-19 74M988 481l49 13" stroke="#a5a4a1" />
    <circle cx="1002" cy="526" r="19" fill="#a9a7a3" stroke="#73726f" />
    <path d="M1013 472l11 2-1 5-10-2zM1006 478l10 2-1 3-10-2z" fill="#575654" />

    <polygon points="1054,522 1140,544 1134,570 1049,546" fill="url(#thickRod)" />

    <g fill="#a8600f">
      <path d="M1103 439l66 17v7l83 20 1-6 284 71-2 7 9 2v3l8-1-3 24-6-1-1-4-12-2-2 8-284-70 1-8-82-20-3 7-67-17z" />
      <path d="M1147 533l180 45q6 2 10 8l44 11-9 40-47-11-7 2-184-46z" />
    </g>
    <path d="M1169 457l-9 35M1536 550l-8 33M1543 558l-4 20M1551 562l-4 18" fill="none" stroke="#c47a2b" />
    <ellipse cx="1194" cy="481" rx="5.500" ry="7" fill="#fdfdfd" />
    <ellipse cx="1354" cy="509" rx="7.500" ry="6" fill="#c47426" />
    <ellipse cx="1353" cy="513" rx="5" ry="2.500" fill="#fdfdfd" />
    <path d="M1345 598q4-1 9 4-5 0-9-4z" fill="#fdfdfd" />
    <path d="M1337 608q-1-8 7-11M1332 582l5 8" fill="none" stroke="#c47426" />
    <g transform="rotate(13 1376 617)">
      <ellipse cx="1376" cy="617" rx="4.500" ry="20.500" fill="#e4ee13" />
      <ellipse cx="1377" cy="616" rx="2.500" ry="15" fill="#8fdb62" />
      <path d="M1375 605l3 6-3 6 3 6-3 6" fill="none" stroke="#7b9410" />
    </g>
    <path d="M1352 615v17l4-3 5 8 4-2-4-8h5z" fill="#fff" stroke="#111" strokeWidth="1.200" />

    <path d="M476 966l4-20" stroke="#000060" />
    <path d="M481 938l-7 10 11 2z" fill="#04047c" />
    <path d="M477 966l18 6" stroke="#700" />
    <path d="M503 974l-11-7v11z" fill="#8d0606" />
    <circle cx="477" cy="966" r="6" fill="#178a1c" />
    <AxisText x="479" y="937" fill="#6f79b5">Z</AxisText>
    <AxisText x="505" y="981" fill="#cf6a6a">X</AxisText>
  </Scene>
)

/* ---------- data ---------- */

const tabs = ['三维模型', '草图', '标注', '检验', '工具', '管理', '视图', '环境', '快速入门', '协作']

// [text, pixels scrolled out on the left, shaded]
const treeRows = [
  ['轮轴设计-结束', 3, true],
  ['', 0, true],
  ['', 0, true],
  ['标系', 10, true],
  ['柱塞: 1', 0, true],
  ['焊接件: 1', 10, true],
  ['柱塞推动板: 1', 2, true],
  ['接: 1', 8, true],
  ['接: 2', 8, true],
  ['塞套: 1', 9, true],
  ['塞套: 1', 0],
  ['(1)', 0],
  ['', 0],
  ['坐标系', 3],
  ['1', 4],
  ['1', 4],
  ['2', 4],
  ['阵列1', 2],
  ['4', 4],
  ['终止', 3],
  ['', 0, true],
  ['接头: 1', 9, true],
  ['1', 4, true],
  ['', 0, true],
  ['', 0, true],
  ['次: 1', 9, true],
  ['', 0, true],
  ['', 0, true],
]

const Section = ({ title, pad, children }) => (
  <section>
    <SectionHead>
      <Icon name="down" size={9} />
      {title}
    </SectionHead>
    <Fields $pad={pad}>{children}</Fields>
  </section>
)

const App = () => {
  return (
    <Page>
      <GlobalStyle />
      <TitleBar>
        <QuickTools>
          <ToolButton aria-label="open"><Icon name="open" /></ToolButton>
          <ToolButton aria-label="save"><Icon name="save" /></ToolButton>
          <ToolButton aria-label="undo"><Icon name="undo" /></ToolButton>
          <CaretButton aria-label="undo list"><Icon name="down" size={7} /></CaretButton>
          <ToolButton aria-label="redo"><Icon name="redo" /></ToolButton>
          <CaretButton aria-label="redo list"><Icon name="down" size={7} /></CaretButton>
          <ToolButton aria-label="home"><Icon name="home" /></ToolButton>
          <ToolButton aria-label="update"><Icon name="bolt" /></ToolButton>
          <CaretButton aria-label="update list"><Icon name="down" size={7} /></CaretButton>
          <ToolButton aria-label="select"><Icon name="select" /></ToolButton>
          <CaretButton aria-label="select list"><Icon name="down" size={7} /></CaretButton>
          <ToolButton aria-label="link"><Icon name="link" /></ToolButton>
          <ToolButton aria-label="material"><Icon name="ball" /></ToolButton>
          <Combo>
            <ComboSelect aria-label="material list"><option>铁，铸造</option></ComboSelect>
            <Icon name="down" size={9} />
          </Combo>
          <ToolButton aria-label="appearance"><Icon name="wheel" /></ToolButton>
          <Combo $swatch>
            <Icon name="swatch" size={18} />
            <ComboSelect aria-label="appearance list"><option>*橙色</option></ComboSelect>
            <Icon name="down" size={9} />
          </Combo>
          <ToolButton aria-label="adjust"><Icon name="wheelPick" /></ToolButton>
          <ToolButton aria-label="clear"><Icon name="wheelClear" /></ToolButton>
          <ToolButton aria-label="parameters"><Icon name="fx" /></ToolButton>
          <ToolButton aria-label="add"><Icon name="plusGrey" /></ToolButton>
          <ToolButton aria-label="parts"><Icon name="parts" /></ToolButton>
          <ToolButton aria-label="customize"><Icon name="customize" size={11} /></ToolButton>
        </QuickTools>
        <Title>蜗杆齿轮轴设计-结束.iam</Title>
        <AccountTools>
          <Icon name="right" size={8} />
          <SearchBox aria-label="search" placeholder="搜索帮助和命令..." />
          <Login><Icon name="user" />登录</Login>
          <ToolButton aria-label="account list"><Icon name="down" size={7} /></ToolButton>
          <CartBox>
            <ToolButton aria-label="cart"><Icon name="cart" /></ToolButton>
            <Rule />
            <HelpButton aria-label="help">
              <Icon name="help" />
              <Icon name="down" size={7} />
            </HelpButton>
          </CartBox>
        </AccountTools>
      </TitleBar>
      <TabBar>
        <FirstTab>ctory</FirstTab>
        {tabs.map((t, i) => (
          <Tab key={t} $active={i === 0}>{t}</Tab>
        ))}
        <CollapseButton aria-label="collapse">
          <Icon name="collapse" />
          <Icon name="down" size={7} />
        </CollapseButton>
      </TabBar>

      <Ribbon>
        <Group $width={75}>
          <GroupBody>
            <SketchButton>
              <Icon name="sketch" size={38} box={41} />
              <SketchText>
                <span>开始创建<br />二维草图</span>
                <Icon name="down" size={6} />
              </SketchText>
            </SketchButton>
          </GroupBody>
          <GroupLabel $after={20}>草图</GroupLabel>
        </Group>
        <Group $width={355}>
          <GroupBody>
            <BigButton $active><Icon name="extrude" size={40} box={40} />拉伸</BigButton>
            <BigButton><Icon name="revolve" size={40} box={40} />旋转</BigButton>
            <Column $left={5}>
              <Small icon="sweep">扫掠</Small>
              <Small icon="loft">放样</Small>
              <Small icon="coil">螺旋扫掠</Small>
            </Column>
            <Column $left={12}>
              <Small icon="emboss">凸雕</Small>
              <Small icon="deriveSm">衍生</Small>
              <Small icon="rib">加强筋</Small>
            </Column>
            <Column $left={12}>
              <Small icon="decal">贴图</Small>
              <Small icon="importDoc">导入</Small>
              <Small icon="unfold">展开</Small>
            </Column>
          </GroupBody>
          <GroupLabel>创建</GroupLabel>
        </Group>
        <Group $width={347}>
          <GroupBody>
            <BigButton><Icon name="hole" size={40} box={40} />孔</BigButton>
            <BigButton><Icon name="fillet" size={40} box={40} />圆角</BigButton>
            <Column $left={4}>
              <Small icon="chamfer">倒角</Small>
              <Small icon="shell">抽壳</Small>
              <Small icon="draft">拔模</Small>
            </Column>
            <Column $left={10}>
              <Small icon="thread">螺纹</Small>
              <Small icon="combine">合并</Small>
              <Small icon="thicken">加厚/ 偏移</Small>
            </Column>
            <Column $left={12}>
              <Small icon="split">分割</Small>
              <Small icon="direct">直接</Small>
              <LastTile><TileIcon icon="removeFace" /></LastTile>
            </Column>
          </GroupBody>
          <GroupLabel>修改 <Icon name="down" size={10} /></GroupLabel>
        </Group>
        <Group $width={110}>
          <GroupBody $pad={7}>
            <BigButton>
              <Icon name="workplane" size={40} box={40} />平面
              <Icon name="down" size={6} />
            </BigButton>
            <Tiles $cols={1} $left={6}>
              <SplitTile>
                <TileIcon icon="axis" />
                <CaretTile aria-label="axis list"><Icon name="down" size={6} /></CaretTile>
              </SplitTile>
              <SplitTile>
                <TileIcon icon="point" />
                <CaretTile aria-label="point list"><Icon name="down" size={6} /></CaretTile>
              </SplitTile>
              <TileIcon icon="ucs" />
            </Tiles>
          </GroupBody>
          <GroupLabel>定位特征</GroupLabel>
        </Group>
        <Group $width={139}>
          <GroupBody $pad={7}>
            <Column>
              <Small icon="removeDetail">删除 详细信息</Small>
              <Small icon="fillVoid">填充中空体</Small>
              <Small icon="envelope">定义 包覆面</Small>
            </Column>
          </GroupBody>
          <GroupLabel>简化</GroupLabel>
        </Group>
        <Group $width={68}>
          <GroupBody>
            <Tiles $cols={2}>
              <TileIcon icon="rect" />
              <TileIcon icon="mirror" />
              <TileIcon icon="circular" />
              <span />
              <TileIcon icon="sketchDriven" />
            </Tiles>
          </GroupBody>
          <GroupLabel>阵列</GroupLabel>
        </Group>
        <Group $width={109}>
          <GroupBody $pad={14}>
            <BigButton>
              <Icon name="box" size={40} box={40} />长方体
              <Icon name="down" size={6} />
            </BigButton>
            <Tiles $cols={1} $left={12}>
              <TileIcon icon="face" />
              <TileIcon icon="convert" />
            </Tiles>
          </GroupBody>
          <GroupLabel>创建自由造型</GroupLabel>
        </Group>
        <Group $width={98}>
          <GroupBody $pad={3}>
            <Tiles $cols={3}>
              <TileIcon icon="stitch" />
              <TileIcon icon="patch" />
              <TileIcon icon="ruled" />
              <TileIcon icon="trimFace" />
              <TileIcon icon="cut" />
              <TileIcon icon="sculpt" />
              <TileIcon icon="extend" />
              <TileIcon icon="replace" />
              <TileIcon icon="copy" />
            </Tiles>
          </GroupBody>
          <GroupLabel>曲面</GroupLabel>
        </Group>
        <Group $width={74}>
          <GroupBody $pad={6}>
            <Tiles $cols={2}>
              <TileIcon icon="grill" />
              <TileIcon icon="boss" />
              <TileIcon icon="snap" />
              <TileIcon icon="rest" />
              <TileIcon icon="ruleFillet" />
              <TileIcon icon="lip" />
            </Tiles>
          </GroupBody>
          <GroupLabel>塑料零件</GroupLabel>
        </Group>
        <Group $width={61}>
          <GroupBody $pad={6}>
            <BigButton><Icon name="measure" size={40} box={40} />测量</BigButton>
          </GroupBody>
          <GroupLabel>测量 <Icon name="down" size={10} /></GroupLabel>
        </Group>
        <Group $width={212}>
          <GroupBody>
            <BigButton><Icon name="derive" size={40} box={40} />衍生</BigButton>
            <Tiles $cols={2} $left={1}>
              <TileIcon icon="place" />
              <TileIcon icon="insertInfo" />
              <TileIcon icon="table" />
              <PartCombo>
                <Icon name="cube" size={18} />
                <ComboSelect aria-label="part"><option>111</option></ComboSelect>
                <Icon name="down" size={10} />
              </PartCombo>
              <TileIcon icon="importDoc" />
            </Tiles>
          </GroupBody>
          <GroupLabel>插入</GroupLabel>
        </Group>
        <Group $width={44}>
          <GroupBody $pad={7}>
            <Tiles $cols={1}>
              <TileIcon icon="pinAdd" />
              <TileIcon icon="pinGroup" />
              <TileIcon icon="harness" />
            </Tiles>
          </GroupBody>
          <GroupLabel>线束</GroupLabel>
        </Group>
        <Group $width={72}>
          <GroupBody $pad={12}>
            <BigButton $muted><Icon name="stress" size={40} box={42} />应力分析</BigButton>
          </GroupBody>
          <GroupLabel>分析</GroupLabel>
        </Group>
      </Ribbon>

      <Work>
        <Browser>
          <BrowserBar $end={5}>
            <Icon name="plus" size={11} />
            <Spacer />
            <Icon name="search" size={15} />
            <Icon name="menu" size={14} />
          </BrowserBar>
          <Tree>
            {treeRows.map(([text, clip, shade], i) => (
              <TreeRow key={i} $clip={clip} $shade={shade} $bold={i === 0}>
                <span>{text}</span>
              </TreeRow>
            ))}
          </Tree>
          <HScroll>
            <Thumb />
            <Icon name="chevron" size={11} />
          </HScroll>
        </Browser>
        <Divider />
        <Properties>
          <PanelBar $end={5}>
            <PropTab>特性 <Icon name="close" size={10} /></PropTab>
            <Icon name="plus" size={11} />
            <Spacer />
            <Icon name="menu" size={14} />
          </PanelBar>
          <FeatureRow>
            <FeatureLink href="#extrude">拉伸</FeatureLink>
            <Spacer />
            <Icon name="cube" size={18} />
            <Icon name="eye" size={18} />
          </FeatureRow>
          <Section title="输入几何图元" pad="5px 0 9px">
            <Field>
              <Label htmlFor="profile">轮廓</Label>
              <Picker id="profile" $active>
                <Icon name="pick" size={16} />
                <Icon name="profile" size={16} />
                选择轮廓
              </Picker>
              <Icon name="warn" size={15} />
            </Field>
            <Field>
              <Label htmlFor="from">自</Label>
              <Picker id="from">
                <Icon name="pick" size={16} />
                <Icon name="facePick" size={16} />
                选择面
              </Picker>
              <Icon name="warn" size={15} />
            </Field>
          </Section>
          <Section title="行为" pad="4px 0 9px">
            <Field $height={30}>
              <Label as="span">方向</Label>
              <ModeButton $active aria-label="default"><Icon name="dir1" /></ModeButton>
              <ModeButton aria-label="flipped"><Icon name="dir2" /></ModeButton>
              <ModeButton aria-label="symmetric"><Icon name="dir3" /></ModeButton>
              <ModeRule />
              <ModeButton aria-label="asymmetric"><Icon name="dir4" /></ModeButton>
              <MoreButton aria-label="more"><Icon name="down" size={7} /></MoreButton>
            </Field>
            <Field>
              <Label htmlFor="distance">距离 <Mono> A</Mono></Label>
              <ValueBox $width={95} $after={11}>
                <ValueInput id="distance" defaultValue="10.000 mm" />
                <ValueMore aria-label="distance options"><Icon name="right" size={7} /></ValueMore>
              </ValueBox>
              <Extents>
                <Icon name="through" size={20} />
                <Icon name="toFace" size={20} />
                <Icon name="toNext" size={20} />
              </Extents>
            </Field>
          </Section>
          <Section title="输出" pad="5px 0 8px">
            <Field $height={30}>
              <Label as="span">布尔</Label>
              <ModeButton $active aria-label="join"><Icon name="join" /></ModeButton>
              <ModeButton aria-label="cut"><Icon name="subtract" /></ModeButton>
              <ModeButton aria-label="intersect"><Icon name="intersect" /></ModeButton>
              <ModeRule />
              <ModeButton aria-label="new solid"><Icon name="newSolid" /></ModeButton>
              <MoreButton aria-label="more"><Icon name="down" size={7} /></MoreButton>
            </Field>
          </Section>
          <Section title="高级特性" pad="5px 0 5px">
            <Field>
              <Label htmlFor="taper">锥度 <Mono> A</Mono></Label>
              <ValueBox $width={154} $after={10}>
                <ValueInput id="taper" defaultValue="0.00 deg" />
                <ValueMore aria-label="taper options"><Icon name="right" size={7} /></ValueMore>
              </ValueBox>
              <Icon name="flip" size={20} />
            </Field>
            <CheckRow>
              <Check type="checkbox" />
              <Mono>iMate</Mono>
            </CheckRow>
            <CheckRow $muted>
              <Check type="checkbox" defaultChecked disabled />
              匹配形状
            </CheckRow>
          </Section>
          <Actions>
            <ActionButton disabled>确定</ActionButton>
            <ActionButton>取消</ActionButton>
            <AddButton aria-label="apply">
              <svg width="20" height="20" viewBox="0 0 20 20">
                <path d="M10 1v18M1 10h18" stroke="#d3d3d3" strokeWidth="4" />
              </svg>
            </AddButton>
          </Actions>
        </Properties>
        <Divider />
        <Viewport>
          <Model />
          <DocTabs>
            <HomeButton aria-label="home"><Icon name="home" /></HomeButton>
            <DocTab $active>蜗杆齿轮轴设计-...iam <Icon name="close" size={11} /></DocTab>
            <DocTab>装配图.iam</DocTab>
            <DocTab>底座.ipt</DocTab>
          </DocTabs>
        </Viewport>
      </Work>
      <StatusBar>
        <span>按住 [Ctrl] (或 [Shift])键的同时单击一下，即可取消选择</span>
      </StatusBar>
    </Page>
  )
}

export default App
